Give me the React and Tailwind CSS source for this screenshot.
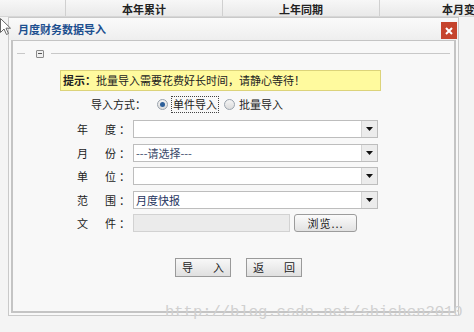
import React from "react";

const Select = ({ value, muted }) => (
  <div className="flex h-[18px] w-[245px] border border-[#bdbdbd] bg-white">
    <div className={`flex-1 flex items-center pl-[2px] text-[11px] leading-none ${muted ? "text-[#3a4a6a]" : "text-[#1f3560]"}`}>
      {value}
    </div>
    <div className="w-[16px] flex items-center justify-center bg-[#ececec] border-l border-[#d4d4d4]">
      <svg width="7" height="4" viewBox="0 0 7 4"><path d="M0 0h7L3.5 4z" fill="#111" /></svg>
    </div>
  </div>
);

const Label = ({ a, b }) => (
  <div className="w-[56px] flex items-center text-[11px] text-[#222] leading-none">
    <span className="w-[28px]">{a}</span>
    <span className="w-[14px]">{b}</span>
    <span>：</span>
  </div>
);

const Radio = ({ checked }) => (
  <span className="w-[11px] h-[11px] rounded-full border border-[#9aa3ad] bg-gradient-to-b from-[#f4f4f4] to-[#dcdcdc] flex items-center justify-center">
    {checked && <span className="w-[5px] h-[5px] rounded-full bg-[#2d5f99]" />}
  </span>
);

export default function App() {
  return (
    <div
      className="relative w-[474px] h-[332px] overflow-hidden bg-[#f4f4f4] text-[#222]"
      style={{ fontFamily: '"Noto Sans CJK SC", "Noto Sans", sans-serif' }}
    >
      {/* table header behind dialog */}
      <div className="flex h-[17px] bg-gradient-to-b from-[#f7f7f7] to-[#e9e9e9] border-b border-[#d6d6d6] text-[11px] font-bold text-[#222] leading-none">
        <div className="w-[66px] border-r border-[#d0d0d0]" />
        <div className="w-[157px] border-r border-[#d0d0d0] flex items-center justify-center pt-[2px]">本年累计</div>
        <div className="w-[157px] border-r border-[#d0d0d0] flex items-center justify-center pt-[2px]">上年同期</div>
        <div className="flex-1 flex items-center pl-[62px] pt-[2px] whitespace-nowrap overflow-hidden">本月变动</div>
      </div>

      {/* dialog */}
      <div className="ml-[8px] w-[451px] h-[299px] border border-[#c9c9c9] bg-[#f8f8f8] flex flex-col">
        <div className="h-[22px] flex items-center justify-between pl-[9px] pr-[1px] bg-gradient-to-b from-[#fafafa] to-[#eeeeee]">
          <span className="text-[11px] font-bold text-[#1d4f8f] leading-none">月度财务数据导入</span>
          <div className="w-[16px] h-[17px] bg-[#c5432c] flex items-center justify-center mt-[3px]">
            <svg width="8" height="8" viewBox="0 0 8 8"><path d="M1 1l6 6M7 1L1 7" stroke="#fff" strokeWidth="2" /></svg>
          </div>
        </div>
        <div className="flex-1 mx-[2px] mb-[2px] border-x-2 border-b-2 border-t border-[#c4c4c4] bg-[#f8f8f8] flex flex-col">
          {/* fieldset legend */}
          <div className="h-[25px] flex items-center px-[4px]">
            <div className="w-[8px] h-px bg-[#c8c8c8]" />
            <div className="w-[11px]" />
            <div className="w-[8px] h-[8px] border border-[#8a8a8a] rounded-[1px] bg-[#f0f0f0] flex items-center justify-center">
              <div className="w-[4px] h-px bg-[#555]" />
            </div>
            <div className="w-[7px]" />
            <div className="flex-1 h-px bg-[#c8c8c8]" />
          </div>

          {/* notice */}
          <div className="ml-[47px] mt-[4px] w-[321px] h-[21px] bg-[#fffa9e] border border-[#dcd37a] flex items-center pl-[2px] text-[11px] leading-none text-[#222]">
            <span className="font-bold">提示：</span>批量导入需要花费好长时间，请静心等待！
          </div>

          {/* import mode */}
          <div className="mt-[5px] h-[16px] flex items-center text-[11px] leading-none">
            <span className="ml-[78px] w-[62px]">导入方式：</span>
            <span className="ml-[4px]"><Radio checked /></span>
            <span className="ml-[3px] px-[1px] py-[2px] border border-dotted border-[#444]">单件导入</span>
            <span className="ml-[5px]"><Radio /></span>
            <span className="ml-[4px]">批量导入</span>
          </div>

          <div className="ml-[64px] mt-[8px] flex flex-col">
            <div className="flex items-center">
              <Label a="年" b="度" />
              <Select value="" />
            </div>
            <div className="flex items-center mt-[6px]">
              <Label a="月" b="份" />
              <Select value="---请选择---" muted />
            </div>
            <div className="flex items-center mt-[5px]">
              <Label a="单" b="位" />
              <Select value="" />
            </div>
            <div className="flex items-center mt-[6px]">
              <Label a="范" b="围" />
              <Select value="月度快报" />
            </div>
            <div className="flex items-center mt-[5px]">
              <Label a="文" b="件" />
              <div className="w-[157px] h-[18px] bg-[#ebebeb] border border-[#d2d2d2]" />
              <div className="ml-[4px] w-[63px] h-[18px] rounded-[3px] border border-[#9c9c9c] bg-gradient-to-b from-[#fbfbfb] to-[#e2e2e2] flex items-center justify-center text-[11px] leading-none tracking-[1px]">
                浏览...
              </div>
            </div>
          </div>

          {/* buttons */}
          <div className="ml-[162px] mt-[26px] flex gap-[15px]">
            <div className="w-[56px] h-[19px] border border-[#9a9a9a] bg-gradient-to-b from-[#f8f8f8] to-[#e0e0e0] flex items-center justify-between px-[6px] text-[11px] leading-none">
              <span>导</span><span>入</span>
            </div>
            <div className="w-[56px] h-[19px] border border-[#9a9a9a] bg-gradient-to-b from-[#f8f8f8] to-[#e0e0e0] flex items-center justify-between px-[6px] text-[11px] leading-none">
              <span>返</span><span>回</span>
            </div>
          </div>
        </div>
      </div>

      {/* mouse cursor */}
      <svg className="absolute left-0 top-[18px]" width="12" height="18" viewBox="0 0 12 18">
        <path d="M0.5 0.5v14l3.5-3.5 2.5 5.5 2-1-2.5-5.3h4.5z" fill="#fff" stroke="#666" strokeWidth="1" />
      </svg>

      {/* watermark */}
      <div
        className="absolute left-[165px] top-[305px] text-[15.5px] leading-none text-[#d0d0d0] whitespace-nowrap"
        style={{ fontFamily: '"Liberation Mono", "DejaVu Sans Mono", monospace' }}
      >
        http://blog.csdn.net/shichen2010
      </div>
    </div>
  );
}
